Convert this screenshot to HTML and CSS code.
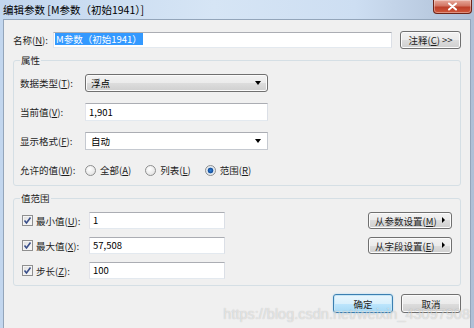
FILE: index.html
```html
<!DOCTYPE html>
<html lang="zh-CN">

<head>
    <meta charset="UTF-8">
    <meta name="viewport" content="width=device-width, initial-scale=1.0">
    <title>编辑参数</title>
    <link rel="stylesheet" href="styles.css">
</head>

<body>
    <div class="window">
        <div class="titlebar">
            <span class="title">编辑参数 [M参数（初始1941）]</span>
            <div class="close">
                <svg width="11" height="9" viewBox="0 0 11 9"><path d="M2 1.5 L9 7.5 M9 1.5 L2 7.5" /></svg>
            </div>
        </div>

        <div class="client">
            <div class="name-row">
                <span class="lbl name-lbl">名称(<u>N</u>):</span>
                <div class="textbox name-box"><span class="selected">M参数（初始1941）</span></div>
                <div class="btn note-btn">注释(<u>C</u>) &gt;&gt;</div>
            </div>

            <fieldset class="group props">
                <legend>属性</legend>
                <div class="row">
                    <span class="lbl prop-lbl">数据类型(<u>T</u>):</span>
                    <div class="combo combo-list">浮点<span class="drop"></span></div>
                </div>
                <div class="row">
                    <span class="lbl prop-lbl">当前值(<u>V</u>):</span>
                    <div class="textbox prop-box">1,901</div>
                </div>
                <div class="row">
                    <span class="lbl prop-lbl">显示格式(<u>F</u>):</span>
                    <div class="combo combo-edit">自动<span class="drop"></span></div>
                </div>
                <div class="row radios">
                    <span class="lbl prop-lbl">允许的值(<u>W</u>):</span>
                    <span class="radio-item"><span class="radio"></span>全部(<u>A</u>)</span>
                    <span class="radio-item"><span class="radio"></span>列表(<u>L</u>)</span>
                    <span class="radio-item"><span class="radio on"></span>范围(<u>R</u>)</span>
                </div>
            </fieldset>

            <fieldset class="group range">
                <legend>值范围</legend>
                <div class="row">
                    <span class="check"><svg width="9" height="9" viewBox="0 0 9 9"><path d="M1.5 4.5 L3.5 7 L7.5 1.5" /></svg></span>
                    <span class="lbl range-lbl">最小值(<u>U</u>):</span>
                    <div class="textbox range-box">1</div>
                    <div class="btn menu-btn">从参数设置(<u>M</u>)<span class="more"></span></div>
                </div>
                <div class="row">
                    <span class="check"><svg width="9" height="9" viewBox="0 0 9 9"><path d="M1.5 4.5 L3.5 7 L7.5 1.5" /></svg></span>
                    <span class="lbl range-lbl">最大值(<u>X</u>):</span>
                    <div class="textbox range-box">57,508</div>
                    <div class="btn menu-btn">从字段设置(<u>E</u>)<span class="more"></span></div>
                </div>
                <div class="row">
                    <span class="check"><svg width="9" height="9" viewBox="0 0 9 9"><path d="M1.5 4.5 L3.5 7 L7.5 1.5" /></svg></span>
                    <span class="lbl range-lbl">步长(<u>Z</u>):</span>
                    <div class="textbox range-box">100</div>
                </div>
            </fieldset>

            <div class="actions">
                <div class="btn default-btn">确定</div>
                <div class="btn">取消</div>
            </div>
        </div>

        <!-- 截图上的水印 -->
        <div class="watermark">https://blog.csdn.net/weixin_43097908</div>
    </div>
</body>

</html>
```

FILE: styles.css
```css
* {
    box-sizing: border-box;
}

body {
    margin: 0;
    font-family: "Noto Sans CJK SC", "Noto Sans", sans-serif;
    font-size: 9.5px;
    color: #1e1e1e;
    background: #c6d8ee;
}

u {
    text-underline-offset: 1px;
}

.window {
    position: relative;
    width: 474px;
    height: 328px;
    overflow: hidden;
    background: linear-gradient(90deg, #c2d6ee, #d6e5f5 45%, #cddef2 75%, #aebfd6);
}

/* 标题栏 */
.titlebar {
    display: flex;
    align-items: flex-start;
    height: 19px;
    padding: 0 2px 0 3px;
}

.title {
    font-size: 10.5px;
    line-height: 19px;
    color: #000;
}

.close {
    display: flex;
    align-items: center;
    justify-content: center;
    margin-left: auto;
    width: 39px;
    height: 14px;
    border: 1px solid #6e2418;
    border-top: none;
    border-radius: 0 0 4px 4px;
    background: linear-gradient(#e7a99b, #d27563 45%, #bd3f29 55%, #d0583c);
    box-shadow: inset 0 0 0 1px rgba(255, 255, 255, 0.35);
}

.close path {
    fill: none;
    stroke: #fff;
    stroke-width: 2;
    stroke-linecap: round;
}

/* 客户区 */
.client {
    height: 309px;
    margin: 0 3px;
    padding: 11px 9px 0;
    background: #f0f0f0;
    border: 1px solid #93a5ba;
    border-bottom: none;
}

.lbl {
    flex: none;
    line-height: 12px;
    white-space: nowrap;
}

.name-row {
    display: flex;
    align-items: center;
    height: 17px;
}

.name-lbl {
    width: 40px;
}

.textbox {
    flex: none;
    height: 17px;
    padding-left: 3px;
    line-height: 15px;
    color: #000;
    background: white;
    border: 1px solid #e3e9ef;
    border-top-color: #abadb3;
    border-left-color: #e2e3ea;
    border-right-color: #dbdfe6;
    white-space: nowrap;
}

.name-box {
    width: 339px;
    height: 16px;
    padding-left: 1px;
    line-height: 13px;
}

.selected {
    display: inline-block;
    padding: 0 1px;
    line-height: 12px;
    color: white;
    background: #3399ff;
}

.btn {
    flex: none;
    display: flex;
    align-items: center;
    justify-content: center;
    height: 18px;
    border: 1px solid #707070;
    border-radius: 3px;
    background: linear-gradient(#f2f2f2, #ebebeb 50%, #dddddd 50%, #cfcfcf);
    box-shadow: inset 0 0 0 1px #fbfbfb;
    color: #1e1e1e;
    white-space: nowrap;
}

.note-btn {
    margin-left: auto;
    width: 61px;
}

/* 分组框 */
.group {
    margin: 5px 0 0;
    padding: 7px 8px 6px 6px;
    min-inline-size: 0;
    border: 1px solid #d5dfe5;
    border-radius: 3px;
}

.group legend {
    padding: 0 1px;
    line-height: 14px;
}

.group .row {
    display: flex;
    align-items: center;
}

.props .row {
    height: 18px;
    margin-bottom: 11px;
}

.props .row.radios {
    margin: 5px 0 0;
}

.prop-lbl {
    width: 65px;
}

.combo {
    position: relative;
    width: 183px;
    height: 18px;
    padding-left: 5px;
    line-height: 16px;
    color: #000;
}

.combo-list {
    border: 1px solid #707070;
    border-radius: 3px;
    background: linear-gradient(#f2f2f2, #ebebeb 50%, #dddddd 50%, #cfcfcf);
    box-shadow: inset 0 0 0 1px #fbfbfb;
}

.combo-edit {
    border: 1px solid #c5c9d0;
    border-top-color: #abadb3;
    background: white;
}

.drop {
    position: absolute;
    right: 6px;
    top: 6px;
    border-left: 3.5px solid transparent;
    border-right: 3.5px solid transparent;
    border-top: 4px solid #000;
}

.prop-box {
    width: 183px;
    height: 18px;
    line-height: 16px;
}

.radio-item {
    display: flex;
    align-items: center;
    margin-right: 14px;
    line-height: 12px;
}

.radio {
    width: 11px;
    height: 11px;
    margin-right: 4px;
    border: 1px solid #8e8f8f;
    border-radius: 50%;
    background: radial-gradient(circle at 40% 35%, #ffffff, #e6e6e6 70%, #d4d4d4);
}

.radio.on {
    background: radial-gradient(circle, #2f7fd6 0, #144e9a 2.5px, #dde6ef 3.2px, #f4f4f4);
}

.range .row {
    height: 17px;
    margin-bottom: 8px;
}

.range .row:last-child {
    margin-bottom: 0;
}

.check {
    display: flex;
    align-items: center;
    justify-content: center;
    flex: none;
    width: 11px;
    height: 11px;
    margin-left: 2px;
    border: 1px solid #8f8f8f;
    background: linear-gradient(135deg, #dedede, #fbfbfb);
    box-shadow: inset 0 0 0 1px #f4f4f4;
}

.check path {
    fill: none;
    stroke: #3a4f8a;
    stroke-width: 1.6;
}

.range-lbl {
    width: 53px;
    margin-left: 3px;
}

.range-box {
    width: 136px;
    height: 17px;
}

.menu-btn {
    position: relative;
    justify-content: flex-start;
    margin-left: auto;
    width: 84px;
    height: 17px;
    padding-left: 6px;
}

.more {
    position: absolute;
    right: 6px;
    top: 4px;
    border-top: 3px solid transparent;
    border-bottom: 3px solid transparent;
    border-left: 3px solid #000;
}

/* 底部按钮 */
.actions {
    display: flex;
    justify-content: flex-end;
    gap: 8px;
    margin-top: 8px;
}

.actions .btn {
    width: 60px;
    height: 19px;
}

.actions .default-btn {
    border-color: #3c7fb1;
    background: linear-gradient(#eaf6fd, #d9f0fc 50%, #bee6fd 50%, #a7d9f5);
    box-shadow: inset 0 0 0 1px #c4e5f6, 0 0 2px #9fd6f3;
}

.watermark {
    position: absolute;
    right: 4px;
    bottom: 6px;
    font-family: "Liberation Sans", Arial, sans-serif;
    font-size: 14.5px;
    color: rgba(255, 255, 255, 0.55);
    text-shadow: 0 0 1px rgba(0, 0, 0, 0.25);
    white-space: nowrap;
}
```
